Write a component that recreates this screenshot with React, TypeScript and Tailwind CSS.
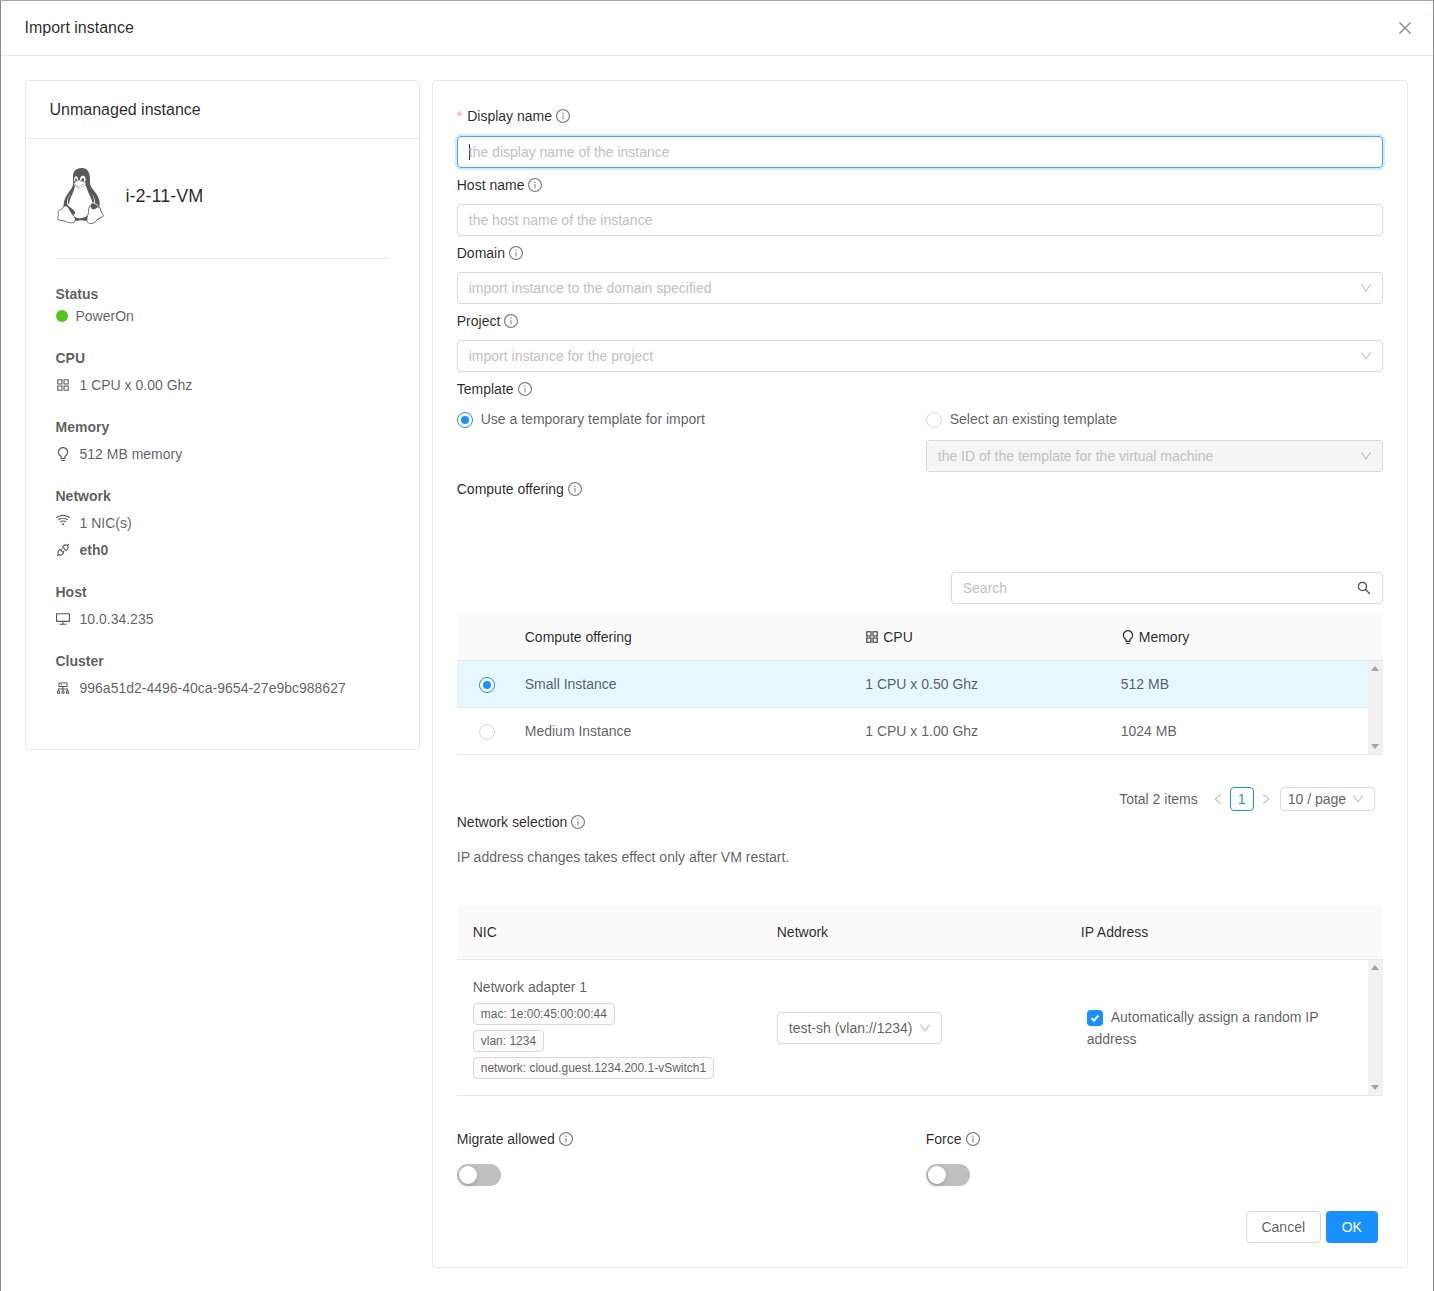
import React from "react";
import {
  AiOutlineAppstore, AiOutlineBulb, AiOutlineWifi, AiOutlineApi, AiOutlineDesktop, AiOutlineCluster,
  AiOutlineInfoCircle, AiOutlineClose, AiOutlineDown, AiOutlineSearch, AiOutlineLeft, AiOutlineRight,
} from "react-icons/ai";
import { FaLinux } from "react-icons/fa";

function Label({ text, required }: { text: string; required?: boolean }) {
  return (
    <div className={`flex h-[36px] items-start text-[14px] leading-[22px] text-[rgba(0,0,0,0.85)] ${required ? "pt-[5px]" : "pt-[6px]"}`}>
      {required && <span className="mr-[5px] text-[#f79a9d]">*</span>}
      <span>{text}</span>
      <span className="flex h-[22px] items-center">
        <AiOutlineInfoCircle className="ml-[3px] text-[16px] text-[rgba(0,0,0,0.5)]" />
      </span>
    </div>
  );
}

function Select({ text, disabled }: { text: string; disabled?: boolean }) {
  return (
    <div className={`flex h-[32px] items-center justify-between rounded border border-[#d9d9d9] pl-[11px] pr-[9px] text-[14px] text-[#bfbfbf] ${disabled ? "bg-[#f5f5f5]" : "bg-white"}`}>
      <span>{text}</span>
      <AiOutlineDown className="text-[14px] text-[rgba(0,0,0,0.25)]" />
    </div>
  );
}

function Radio({ checked }: { checked?: boolean }) {
  return (
    <span className={`flex h-4 w-4 items-center justify-center rounded-full border bg-white ${checked ? "border-[#1890ff]" : "border-[#d9d9d9]"}`}>
      {checked && <span className="h-2 w-2 rounded-full bg-[#1890ff]" />}
    </span>
  );
}

function Stat({ title, children }: { title: string; children: React.ReactNode }) {
  return (
    <div className="mb-[17px]">
      <div className="h-[25px] text-[14px] font-bold leading-[22px] text-[rgba(0,0,0,0.65)]">{title}</div>
      {children}
    </div>
  );
}

function StatRow({ icon, children }: { icon: React.ReactNode; children: React.ReactNode }) {
  return (
    <div className="flex h-[27px] items-start pt-[5px] text-[14px] leading-[16px] text-[rgba(0,0,0,0.65)]">
      <span className="-ml-px flex h-[16px] w-[25px] items-center text-[rgba(0,0,0,0.65)]">{icon}</span>
      {children}
    </div>
  );
}

function Scrollbar() {
  return (
    <div className="flex w-[15px] shrink-0 flex-col items-center justify-between bg-[#f1f1f1] py-[5px]">
      <span className="h-0 w-0 border-x-[4px] border-b-[5px] border-x-transparent border-b-[#a3a3a3]" />
      <span className="h-0 w-0 border-x-[4px] border-t-[5px] border-x-transparent border-t-[#a3a3a3]" />
    </div>
  );
}

function Tag({ children }: { children: React.ReactNode }) {
  return (
    <div className="mb-[5px] w-fit rounded border border-[#d9d9d9] bg-[#fafafa] px-[7px] text-[12px] leading-[20px] text-[rgba(0,0,0,0.65)]">
      {children}
    </div>
  );
}

function Switch() {
  return (
    <div className="mt-[6px] flex h-[22px] w-[44px] items-center rounded-full bg-[#bfbfbf] pl-[2px]">
      <span className="h-[18px] w-[18px] rounded-full bg-white shadow-[0_2px_4px_0_rgba(0,35,11,0.2)]" />
    </div>
  );
}

export default function App() {
  return (
    <div className="h-[1291px] w-[1434px] overflow-hidden border-t border-t-[#95b095] bg-[#8a8a8a] pl-[0.5px] pr-px font-['Liberation_Sans',Arial,sans-serif]">
      <div className="h-full bg-white">
        <div className="flex h-[55px] items-center justify-between border-b border-[#e8e8e8] px-[24px] text-[16px] text-[rgba(0,0,0,0.85)]">
          <span>Import instance</span>
          <AiOutlineClose className="-mr-[5px] text-[18px] text-[rgba(0,0,0,0.45)]" />
        </div>
        <div className="flex items-start gap-[12.25px] p-[24px]">
          <div className="h-[670px] w-[395px] shrink-0 rounded border border-[#e8e8e8]">
            <div className="flex h-[58px] items-center border-b border-[#e8e8e8] px-[24px] text-[16px] text-[rgba(0,0,0,0.85)]">Unmanaged instance</div>
            <div className="px-[30px]">
              <div className="flex h-[120px] items-center border-b border-[#e8e8e8] pb-[4px]">
                <FaLinux className="h-[56px] w-[49px] -translate-y-px text-[#595959]" />
                <span className="ml-[21px] text-[18px] text-[rgba(0,0,0,0.85)]">i-2-11-VM</span>
              </div>
              <div className="pt-[24px]">
                <div className="h-[22px] text-[14px] font-bold leading-[22px] text-[rgba(0,0,0,0.65)]">Status</div>
                <div className="mb-[20px] flex h-[22px] items-center text-[14px] text-[rgba(0,0,0,0.65)]">
                  <span className="mr-[8px] h-[12px] w-[12px] rounded-full bg-[#52c41a]" />PowerOn
                </div>
                <Stat title="CPU"><StatRow icon={<AiOutlineAppstore className="text-[16px]" />}>1 CPU x 0.00 Ghz</StatRow></Stat>
                <Stat title="Memory"><StatRow icon={<AiOutlineBulb className="text-[16px]" />}>512 MB memory</StatRow></Stat>
                <Stat title="Network">
                  <StatRow icon={<AiOutlineWifi className="-mt-[7px] text-[16px]" />}>1 NIC(s)</StatRow>
                  <StatRow icon={<AiOutlineApi className="text-[16px]" />}><b>eth0</b></StatRow>
                </Stat>
                <Stat title="Host"><StatRow icon={<AiOutlineDesktop className="text-[16px]" />}>10.0.34.235</StatRow></Stat>
                <Stat title="Cluster"><StatRow icon={<AiOutlineCluster className="text-[16px]" />}>996a51d2-4496-40ca-9654-27e9bc988627</StatRow></Stat>
              </div>
            </div>
          </div>

          <div className="h-[1188px] w-[976px] shrink-0 rounded border border-[#e8e8e8] px-[24px] pt-[19px]">
            <Label text="Display name" required />
            <div className="flex h-[32px] items-center rounded border border-[#40a9ff] px-[11px] text-[14px] text-[#bfbfbf] shadow-[0_0_0_2px_rgba(24,144,255,0.2)]">
              <span className="-mr-px h-[16px] w-px bg-black/80" />the display name of the instance
            </div>
            <Label text="Host name" />
            <div className="flex h-[32px] items-center rounded border border-[#d9d9d9] px-[11px] text-[14px] text-[#bfbfbf]">the host name of the instance</div>
            <Label text="Domain" />
            <Select text="import instance to the domain specified" />
            <Label text="Project" />
            <Select text="import instance for the project" />
            <Label text="Template" />
            <div className="flex h-[32px]">
              <div className="flex w-[469px] items-start text-[14px] leading-[22px] text-[rgba(0,0,0,0.65)]">
                <span className="mr-[8px] mt-[4px]"><Radio checked /></span>Use a temporary template for import
              </div>
              <div className="flex items-start text-[14px] leading-[22px] text-[rgba(0,0,0,0.65)]">
                <span className="mr-[8px] mt-[4px]"><Radio /></span>Select an existing template
              </div>
            </div>
            <div className="ml-[469px]"><Select text="the ID of the template for the virtual machine" disabled /></div>
            <Label text="Compute offering" />

            <div className="mt-[64px] flex justify-end">
              <div className="flex h-[32px] w-[432px] items-center justify-between rounded border border-[#d9d9d9] pl-[11px] pr-[10px] text-[14px] text-[#bfbfbf]">
                <span>Search</span>
                <AiOutlineSearch className="text-[16px] text-[rgba(0,0,0,0.7)]" />
              </div>
            </div>

            <div className="mt-[10px] text-[14px]">
              <div className="flex h-[47px] items-center border-b border-[#e8e8e8] bg-[#fafafa] text-[rgba(0,0,0,0.85)]">
                <span className="ml-[68px] w-[340.5px]">Compute offering</span>
                <span className="flex w-[255.5px] items-center"><AiOutlineAppstore className="-ml-[1.5px] mr-[3.5px] text-[16px]" />CPU</span>
                <span className="flex items-center"><AiOutlineBulb className="-ml-px mr-[3px] text-[16px]" />Memory</span>
              </div>
              <div className="flex border-b border-[#e8e8e8]">
                <div className="flex-1 text-[rgba(0,0,0,0.65)]">
                  <div className="flex h-[47px] items-center border-b border-[#e8e8e8] bg-[#e6f7ff]">
                    <span className="ml-[22px] w-[46px] translate-y-px"><Radio checked /></span>
                    <span className="w-[340.5px]">Small Instance</span>
                    <span className="w-[255.5px]">1 CPU x 0.50 Ghz</span>
                    <span>512 MB</span>
                  </div>
                  <div className="flex h-[46px] items-center">
                    <span className="ml-[22px] w-[46px] translate-y-px"><Radio /></span>
                    <span className="w-[340.5px]">Medium Instance</span>
                    <span className="w-[255.5px]">1 CPU x 1.00 Ghz</span>
                    <span>1024 MB</span>
                  </div>
                </div>
                <Scrollbar />
              </div>
            </div>

            <div className="mr-[8px] mt-[32px] flex h-[24px] items-center justify-end text-[14px] text-[rgba(0,0,0,0.65)]">
              <span className="mr-[8px]">Total 2 items</span>
              <span className="flex h-[24px] w-[24px] items-center justify-center"><AiOutlineLeft className="text-[14px] text-[rgba(0,0,0,0.25)]" /></span>
              <span className="flex h-[24px] w-[24px] items-center justify-center rounded border border-[#1890ff] text-[#1890ff]">1</span>
              <span className="flex h-[24px] w-[24px] items-center justify-center"><AiOutlineRight className="text-[14px] text-[rgba(0,0,0,0.25)]" /></span>
              <span className="ml-[2px] flex h-[24px] w-[95px] items-center justify-between rounded border border-[#d9d9d9] pl-[7px] pr-[9px]">10 / page<AiOutlineDown className="text-[14px] text-[rgba(0,0,0,0.25)]" /></span>
            </div>
            <div className="-mt-[6px]"><Label text="Network selection" /></div>
            <div className="mt-[5px] h-[22px] text-[14px] leading-[22px] text-[rgba(0,0,0,0.65)]">IP address changes takes effect only after VM restart.</div>

            <div className="mt-[37px] text-[14px]">
              <div className="flex h-[55px] items-center border-b border-[#e8e8e8] bg-[#fafafa] px-[16px] text-[rgba(0,0,0,0.85)]">
                <span className="w-[304px]">NIC</span>
                <span className="w-[304px]">Network</span>
                <span>IP Address</span>
              </div>
              <div className="flex h-[136px] border-b border-[#e8e8e8]">
                <div className="flex flex-1 items-center px-[16px] text-[rgba(0,0,0,0.65)]">
                  <div className="w-[304px]">
                    <div className="mb-[5px] leading-[22px]">Network adapter 1</div>
                    <Tag>mac: 1e:00:45:00:00:44</Tag>
                    <Tag>vlan: 1234</Tag>
                    <div className="-mb-[5px]"><Tag>network: cloud.guest.1234.200.1-vSwitch1</Tag></div>
                  </div>
                  <div className="w-[310px]">
                    <div className="flex h-[32px] w-[165px] items-center justify-between rounded border border-[#d9d9d9] pl-[11px] pr-[9px] pt-[1px]">
                      test-sh (vlan://1234)<AiOutlineDown className="text-[14px] text-[rgba(0,0,0,0.25)]" />
                    </div>
                  </div>
                  <div className="w-[250px] leading-[22px]">
                    <span className="mr-[8px] inline-flex h-4 w-4 -translate-y-px items-center justify-center rounded bg-[#1890ff] align-[-3px]">
                      <svg viewBox="0 0 12 12" className="h-3 w-3"><path d="M2.5 6.2 5 8.5 9.5 3.5" fill="none" stroke="white" strokeWidth="2" /></svg>
                    </span>
                    Automatically assign a random IP address
                  </div>
                </div>
                <Scrollbar />
              </div>
            </div>

            <div className="mt-[26px] flex">
              <div className="w-[469px]"><Label text="Migrate allowed" /><Switch /></div>
              <div><Label text="Force" /><Switch /></div>
            </div>

            <div className="mr-[5px] mt-[25px] flex justify-end gap-[5px] text-[14px]">
              <span className="flex h-[32px] w-[75px] items-center justify-center rounded border border-[#d9d9d9] text-[rgba(0,0,0,0.65)]">Cancel</span>
              <span className="flex h-[32px] w-[52px] items-center justify-center rounded bg-[#1890ff] text-white">OK</span>
            </div>
          </div>
        </div>
      </div>
    </div>
  );
}
